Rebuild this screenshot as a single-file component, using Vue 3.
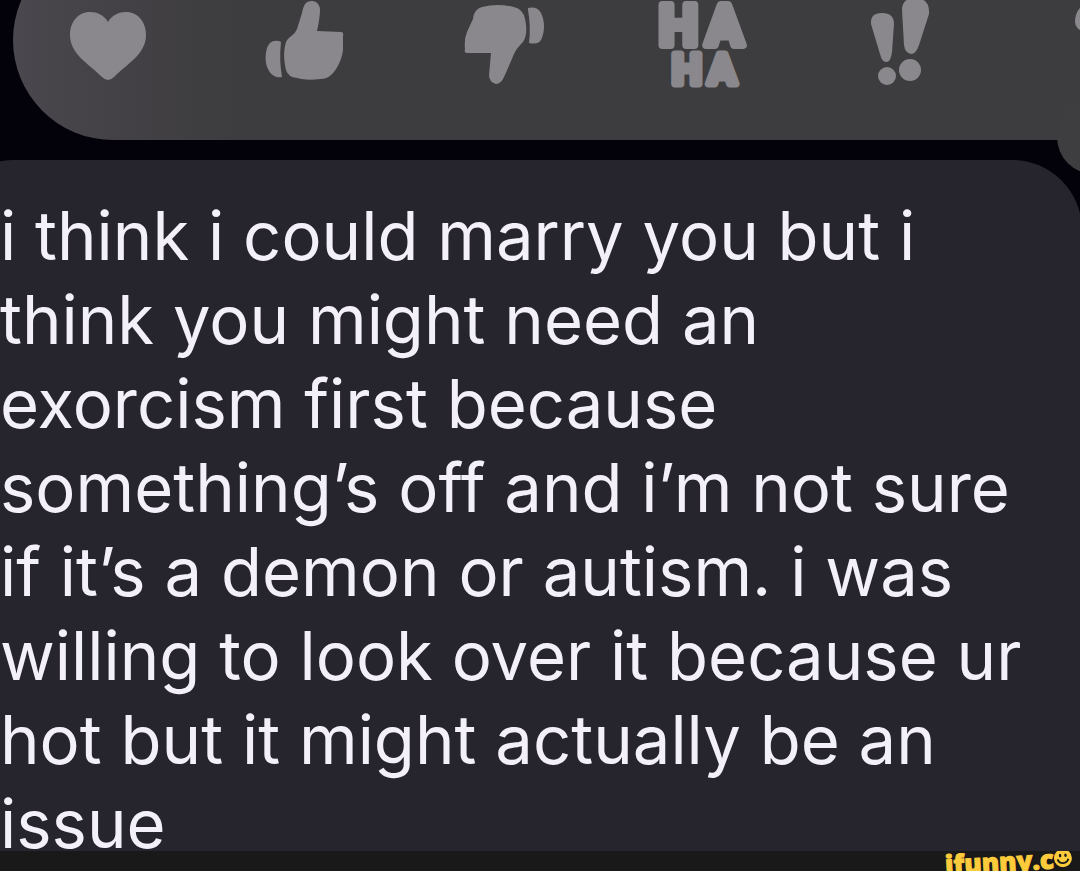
<script setup>
const lines = [
  'i think i could marry you but i',
  'think you might need an',
  'exorcism first because',
  'something’s off and i’m not sure',
  'if it’s a demon or autism. i was',
  'willing to look over it because ur',
  'hot but it might actually be an',
  'issue',
]
</script>

<template>
  <main class="screen">
    <div class="reactions" role="toolbar" aria-label="Reactions">
      <button class="reaction" type="button" aria-label="Love">
        <svg class="icon" viewBox="0 0 100 100">
          <path d="M50 22C46 15 39 12 32 12C20 12 12 22 12 35C12 54 30 63 44 77Q50 83 56 77C70 63 88 54 88 35C88 22 80 12 68 12C61 12 54 15 50 22Z" />
        </svg>
      </button>
      <button class="reaction" type="button" aria-label="Like">
        <svg class="icon" viewBox="0 0 100 100">
          <path d="M49 4C53 -1 63 0 64 9Q64 18 61 31L85 32Q88 32 87 36L87 50C86 60 80 71 75 75Q71 79 64 79C56 80 48 80 41 78Q32 77 30 70C28 62 27 52 30 42C33 36 38 36 41 29L46 13Q47 7 49 4Z" />
          <path d="M23 41Q14 39 11 48C9 55 9 63 12 69C15 76 21 78 26 77Q23 60 25 42Z" />
        </svg>
      </button>
      <button class="reaction" type="button" aria-label="Dislike">
        <svg class="icon" viewBox="0 0 100 100">
          <path d="M12 53Q10 52 11 49Q10 39 13 32L19 19Q20 9 28 7Q44 3 60 7Q69 9 71 19C73 28 73 36 69 42Q62 49 60 54Q55 66 50 77Q47 84 42 84Q35 82 35 75L37 53Z" />
          <path d="M74 8Q83 6 87 13C91 21 91 32 87 40Q84 45 75 43Q77 26 74 10Z" />
        </svg>
      </button>
      <button class="reaction" type="button" aria-label="Laugh">
        <svg class="icon haha" viewBox="0 0 100 100">
          <text class="ha-large" x="7 54" y="45">HA</text>
          <text class="ha-small" x="20 56" y="84">HA</text>
        </svg>
      </button>
      <button class="reaction" type="button" aria-label="Emphasize">
        <svg class="icon" viewBox="0 0 100 100">
          <path d="M21 24Q20 13 32 13Q44 13 44 24L42 52Q41 62 36 62Q32 62 30 54Z" />
          <circle cx="37" cy="76" r="9" />
          <path d="M52 10Q52 -2 65 -2Q80 -2 79 14L69 45Q66 54 61 54Q55 53 54 45Z" />
          <circle cx="60" cy="70" r="11" />
        </svg>
      </button>
      <button class="reaction" type="button" aria-label="Question">
        <svg class="icon" viewBox="0 0 100 100">
          <path class="hook" d="M36 22C36 4 66 4 66 24C66 38 50 38 50 54" />
          <circle cx="50" cy="74" r="8" />
        </svg>
      </button>
      <span class="tail"></span>
    </div>

    <section class="bubble">
      <p class="message">
        <span v-for="line in lines" :key="line" class="line">{{ line }}</span>
      </p>
    </section>

    <footer class="footer">
      <span class="brand">
        ifunny.c<svg class="smiley" viewBox="0 0 20 20">
          <circle cx="10" cy="10" r="10" />
          <ellipse class="ink" cx="7" cy="7" rx="1.4" ry="2" />
          <ellipse class="ink" cx="13" cy="7" rx="1.4" ry="2" />
          <path class="smile" d="M4 11C6 17 14 17 16 11" />
        </svg>
      </span>
    </footer>
  </main>
</template>

<style>
body {
  margin: 0;
  background: #19191a;
}
</style>

<style scoped>
.screen {
  overflow: hidden;
  background: #030109;
  font-family: Inter, "Liberation Sans", sans-serif;
}

.reactions {
  position: relative;
  display: flex;
  gap: 8px;
  box-sizing: border-box;
  height: 200px;
  margin: -60px -120px 0 13px;
  padding-top: 60px;
  border-radius: 100px;
  background: linear-gradient(90deg, #4a474e 0, #434145 110px, #3d3c3e 220px, #3d3c3f 100%);
}

.reaction {
  flex: 0 0 190px;
  height: 100px;
  padding: 0;
  border: 0;
  background: none;
  color: #8a888c;
  font: inherit;
}

.icon {
  display: block;
  width: 100px;
  height: 100px;
  margin: 0 auto;
  overflow: visible;
  fill: currentColor;
}

.hook {
  fill: none;
  stroke: currentColor;
  stroke-width: 18;
  stroke-linecap: round;
}

.haha {
  font-family: Roboto, "Liberation Sans", sans-serif;
  font-weight: 700;
  stroke: currentColor;
  stroke-linejoin: round;
}

.ha-large {
  font-size: 55px;
  stroke-width: 8px;
}

.ha-small {
  font-size: 42px;
  stroke-width: 7px;
}

.tail {
  position: absolute;
  right: 69px;
  bottom: -34px;
  width: 74px;
  height: 74px;
  border-radius: 50%;
  background: #3e3d40;
}

.bubble {
  margin: 20px -2px 0 -56px;
  padding: 34px 48px 0 56px;
  border-radius: 70px 70px 0 0;
  background: #26242c;
}

.message {
  height: 657px;
  margin: 0;
  color: #f3f0fa;
  font-size: 67px;
  line-height: 84px;
}

.line {
  display: block;
  white-space: nowrap;
}

.footer {
  position: relative;
  display: flex;
  justify-content: flex-end;
  height: 20px;
  padding-right: 8px;
  overflow: hidden;
  background: #19191a;
}

.brand {
  display: flex;
  align-items: center;
  height: 20px;
  color: #fccb3c;
  font-family: "Open Sans", "Noto Sans", sans-serif;
  font-size: 26px;
  font-weight: 800;
  line-height: 20px;
  -webkit-text-stroke: 1px currentColor;
  transform: rotate(-3deg);
}

.smiley {
  width: 18px;
  height: 18px;
  fill: currentColor;
}

.smiley .ink {
  fill: #19191a;
}

.smile {
  fill: none;
  stroke: #19191a;
  stroke-width: 2;
}
</style>
